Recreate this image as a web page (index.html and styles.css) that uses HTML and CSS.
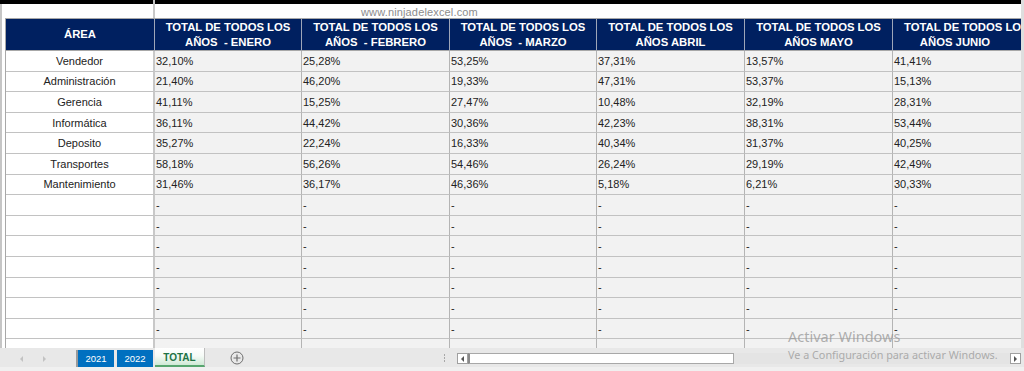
FILE: index.html
```html
<!DOCTYPE html>
<html lang="es">
<head>
<meta charset="utf-8">
<title>TOTAL</title>
<link rel="stylesheet" href="styles.css">
</head>
<body>
<div class="app">
  <div class="sheet">
    <div class="blackbar"><div class="bb-a"></div><div class="bb-line"></div><div class="bb-b"></div></div>
    <div class="body">
      <div class="gutter"></div>
      <div class="main">
        <div class="spacer"><div class="sp-a"></div><div class="sp-line"></div><div class="sp-b"></div></div>
        <div class="grid">
          <div class="hd c0"><span>ÁREA</span></div>
          <div class="hd"><span>TOTAL DE TODOS LOS<br>AÑOS &nbsp;- ENERO</span></div>
          <div class="hd"><span>TOTAL DE TODOS LOS<br>AÑOS &nbsp;- FEBRERO</span></div>
          <div class="hd"><span>TOTAL DE TODOS LOS<br>AÑOS &nbsp;- MARZO</span></div>
          <div class="hd"><span>TOTAL DE TODOS LOS<br>AÑOS ABRIL</span></div>
          <div class="hd"><span>TOTAL DE TODOS LOS<br>AÑOS MAYO</span></div>
          <div class="hd last"><span class="nowrap">TOTAL DE TODOS LOS</span><span class="l2-shift">AÑOS JUNIO</span></div>

          <div class="c0 lab">Vendedor</div><div class="v">32,10%</div><div class="v">25,28%</div><div class="v">53,25%</div><div class="v">37,31%</div><div class="v">13,57%</div><div class="v">41,41%</div>
          <div class="c0 lab">Administración</div><div class="v">21,40%</div><div class="v">46,20%</div><div class="v">19,33%</div><div class="v">47,31%</div><div class="v">53,37%</div><div class="v">15,13%</div>
          <div class="c0 lab">Gerencia</div><div class="v">41,11%</div><div class="v">15,25%</div><div class="v">27,47%</div><div class="v">10,48%</div><div class="v">32,19%</div><div class="v">28,31%</div>
          <div class="c0 lab">Informática</div><div class="v">36,11%</div><div class="v">44,42%</div><div class="v">30,36%</div><div class="v">42,23%</div><div class="v">38,31%</div><div class="v">53,44%</div>
          <div class="c0 lab">Deposito</div><div class="v">35,27%</div><div class="v">22,24%</div><div class="v">16,33%</div><div class="v">40,34%</div><div class="v">31,37%</div><div class="v">40,25%</div>
          <div class="c0 lab">Transportes</div><div class="v">58,18%</div><div class="v">56,26%</div><div class="v">54,46%</div><div class="v">26,24%</div><div class="v">29,19%</div><div class="v">42,49%</div>
          <div class="c0 lab">Mantenimiento</div><div class="v">31,46%</div><div class="v">36,17%</div><div class="v">46,36%</div><div class="v">5,18%</div><div class="v">6,21%</div><div class="v">30,33%</div>

          <div class="c0 lab"></div><div class="v">-</div><div class="v">-</div><div class="v">-</div><div class="v">-</div><div class="v">-</div><div class="v">-</div>
          <div class="c0 lab"></div><div class="v">-</div><div class="v">-</div><div class="v">-</div><div class="v">-</div><div class="v">-</div><div class="v">-</div>
          <div class="c0 lab"></div><div class="v">-</div><div class="v">-</div><div class="v">-</div><div class="v">-</div><div class="v">-</div><div class="v">-</div>
          <div class="c0 lab"></div><div class="v">-</div><div class="v">-</div><div class="v">-</div><div class="v">-</div><div class="v">-</div><div class="v">-</div>
          <div class="c0 lab"></div><div class="v">-</div><div class="v">-</div><div class="v">-</div><div class="v">-</div><div class="v">-</div><div class="v">-</div>
          <div class="c0 lab"></div><div class="v">-</div><div class="v">-</div><div class="v">-</div><div class="v">-</div><div class="v">-</div><div class="v">-</div>
          <div class="c0 lab"></div><div class="v">-</div><div class="v">-</div><div class="v">-</div><div class="v">-</div><div class="v">-</div><div class="v">-</div>
          <div class="c0 lab"></div><div class="v"></div><div class="v"></div><div class="v"></div><div class="v"></div><div class="v"></div><div class="v"></div>
        </div>
      </div>
    </div>
  </div>

  <div class="tabbar">
    <div class="nav">
      <span class="arr arr-l"></span>
      <span class="arr arr-r"></span>
    </div>
    <div class="tabs">
      <div class="tab blue">2021</div>
      <div class="tab blue">2022</div>
      <div class="tab active">TOTAL</div>
    </div>
    <svg class="plus" width="14" height="14" viewBox="0 0 14 14">
      <circle cx="7" cy="7" r="6" fill="none" stroke="#6e6e6e" stroke-width="1"/>
      <path d="M7 3.5v7M3.5 7h7" stroke="#6e6e6e" stroke-width="1.2"/>
    </svg>
    <div class="dots"><i></i><i></i><i></i></div>
    <div class="hscroll">
      <div class="sbtn"><span class="tri-l"></span></div>
      <div class="thumb"></div>
      <div class="track"></div>
      <div class="sbtn"><span class="tri-r"></span></div>
    </div>
  </div>

  <div class="wm-site">www.ninjadelexcel.com</div>
  <div class="wm-win">
    <div class="wm-t1">Activar Windows</div>
    <div class="wm-t2">Ve a Configuración para activar Windows.</div>
  </div>
</div>
</body>
</html>
```

FILE: styles.css
```css
html, body {
  margin: 0;
  padding: 0;
}
body {
  width: 1024px;
  height: 371px;
  overflow: hidden;
  background: #fff;
  font-family: "Liberation Sans", Arial, sans-serif;
}
.app {
  position: relative;
  width: 1024px;
  height: 371px;
  display: flex;
  flex-direction: column;
}
.sheet {
  height: 348px;
  display: flex;
  flex-direction: column;
  overflow: hidden;
  background: #fff;
  border-right: 3px solid #dedede;
}
.blackbar {
  height: 4px;
  display: flex;
  flex: none;
}
.bb-a { width: 153px; background: #000; }
.bb-line { width: 2px; background: #c4c4c4; }
.bb-b { flex: 1; background: #000; }

.body {
  flex: 1;
  display: flex;
  min-height: 0;
}
.gutter {
  width: 5px;
  flex: none;
  box-sizing: border-box;
  border-left: 2px solid #c6c6c6;
}
.main {
  flex: 1;
  min-width: 0;
  display: flex;
  flex-direction: column;
  overflow: hidden;
}
.spacer {
  height: 14px;
  flex: none;
  display: flex;
}
.sp-a { width: 148px; }
.sp-line { width: 2px; background: #c8c8c8; }
.sp-b { flex: 1; }

.grid {
  display: grid;
  grid-template-columns: 149px 147px 148px 147px 148px 148px 147px;
  grid-template-rows: 32px;
  grid-auto-rows: 20.6px;
  border-left: 1px solid #a8a8a8;
  border-top: 1px solid #a8a8a8;
  width: max-content;
}
.grid > div {
  box-sizing: border-box;
  border-right: 1px solid #b4b4b4;
  border-bottom: 1px solid #c2c2c2;
}
.grid > .c0 {
  border-right: 2px solid #c8c8c8;
}
.hd {
  background: #002060;
  color: #fff;
  font-weight: bold;
  font-size: 11.3px;
  line-height: 15px;
  text-align: center;
  display: flex;
  flex-direction: column;
  align-items: center;
  justify-content: center;
  overflow: hidden;
  white-space: nowrap;
}
.grid > .hd {
  border-right: 1px solid #9ea6b8;
  border-bottom: 1px solid #a8a8a8;
}
.hd.last {
  align-items: flex-start;
  padding-left: 11px;
}
.l2-shift {
  display: block;
  width: 126px;
  text-align: center;
  padding-right: 24px;
  box-sizing: border-box;
}
.lab {
  background: #fff;
  color: #222;
  font-size: 11px;
  text-align: center;
  display: flex;
  align-items: center;
  justify-content: center;
}
.v {
  background: #f2f2f2;
  color: #222;
  font-size: 11px;
  padding-left: 1px;
  display: flex;
  align-items: center;
}

/* tab bar */
.tabbar {
  height: 23px;
  box-sizing: border-box;
  background: #e8e8e8;
  border-bottom: 4px solid #f0f0f0;
  display: flex;
  align-items: flex-start;
  position: relative;
}
.nav {
  width: 76px;
  height: 19px;
  flex: none;
  position: relative;
}
.arr {
  position: absolute;
  top: 8px;
  width: 0;
  height: 0;
  border-top: 3px solid transparent;
  border-bottom: 3px solid transparent;
}
.arr-l { left: 20px; border-right: 3px solid #c2c2c2; }
.arr-r { left: 43px; border-left: 3px solid #c2c2c2; }

.tabs {
  display: flex;
  align-items: flex-start;
  border-left: 2px solid #9a9a9a;
  height: 17px;
  margin-top: 2px;
  flex: none;
}
.tab {
  height: 17px;
  box-sizing: border-box;
  font-size: 9.5px;
  display: flex;
  align-items: center;
  justify-content: center;
}
.tab.blue {
  background: #0070c0;
  color: #fff;
  width: 36px;
  margin-right: 3px;
}
.tab.blue + .tab.blue {
  margin-right: 2px;
}
.tab.active {
  width: 50px;
  height: 19px;
  margin-top: -2px;
  background: linear-gradient(#ffffff 0%, #f6fbf7 45%, #cfe9d6 100%);
  color: #217346;
  font-weight: bold;
  font-size: 10px;
  border-bottom: 2px solid #57a66f;
  border-right: 1px solid #bdbdbd;
  padding-top: 1px;
}
.plus {
  margin-left: 25px;
  margin-top: 3px;
  flex: none;
}
.dots {
  margin-left: 200px;
  margin-top: 6px;
  width: 2px;
  display: flex;
  flex-direction: column;
  gap: 1px;
  flex: none;
}
.dots i {
  display: block;
  width: 1px;
  height: 2px;
  background: #a8a8a8;
}
.hscroll {
  margin-left: 11px;
  margin-top: 5px;
  height: 11px;
  width: 564px;
  display: flex;
  flex: none;
}
.sbtn {
  width: 11px;
  height: 11px;
  box-sizing: border-box;
  border: 1px solid #a0a0a0;
  background: #fff;
  display: flex;
  align-items: center;
  justify-content: center;
  flex: none;
}
.tri-l {
  width: 0; height: 0;
  border-top: 3px solid transparent;
  border-bottom: 3px solid transparent;
  border-right: 3px solid #555;
}
.tri-r {
  width: 0; height: 0;
  border-top: 3px solid transparent;
  border-bottom: 3px solid transparent;
  border-left: 3px solid #555;
}
.thumb {
  width: 266px;
  height: 11px;
  box-sizing: border-box;
  background: #fff;
  border: 1px solid #a8a8a8;
  border-left: 2px solid #8a8a8a;
  flex: none;
}
.track {
  flex: 1;
  background: #e4e4e4;
}

/* watermarks (overlays) */
.wm-site {
  position: absolute;
  left: 361px;
  top: 6px;
  font-size: 11px;
  letter-spacing: 0.15px;
  color: #8c8c8c;
}
.wm-win {
  position: absolute;
  left: 788px;
  top: 327px;
  font-family: "Noto Sans", "Open Sans", sans-serif;
  color: rgba(150, 150, 150, 0.75);
}
.wm-t1 {
  font-size: 14.5px;
  line-height: 18px;
}
.wm-t2 {
  font-size: 10.8px;
  line-height: 14px;
  margin-top: 3px;
}
```
